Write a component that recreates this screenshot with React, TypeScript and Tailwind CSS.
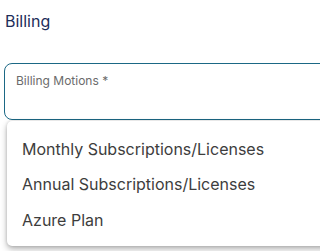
import React from "react";

export default function App() {
  const items = [
    "Monthly Subscriptions/Licenses",
    "Annual Subscriptions/Licenses",
    "Azure Plan",
  ];
  return (
    <div className="w-[320px] h-[251px] bg-white overflow-hidden relative" style={{ fontFamily: "Inter, 'Noto Sans', sans-serif" }}>
      <div className="pl-[5px] pt-[11px] text-[16px] leading-[20px] text-[#1e2d5a]">Billing</div>
      <div className="ml-[4px] mt-[32px] w-[340px] h-[57px] border-[1.5px] border-[#1b6885] rounded-[8px] px-[11px] pt-[9px] text-[12px] leading-[16px] text-[#6b6b6b]">
        Billing Motions *
      </div>
      <div className="absolute left-[7px] top-[121px] w-[340px] h-[125px] bg-white rounded-[5px] shadow-[0_3px_6px_rgba(0,0,0,0.3),0_0px_3px_rgba(0,0,0,0.15)] pt-[10px]">
        {items.map((t) => (
          <div key={t} className="h-[35.5px] flex items-center pl-[15px] text-[16px] text-[#3d3d3d]">
            {t}
          </div>
        ))}
      </div>
    </div>
  );
}
